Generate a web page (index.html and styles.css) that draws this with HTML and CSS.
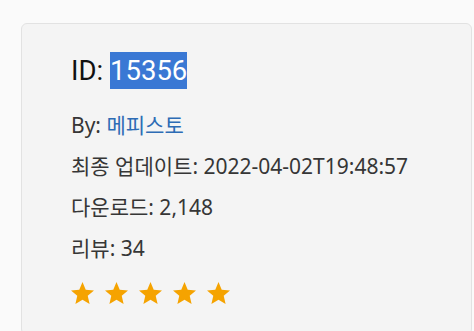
FILE: index.html
```html
<!DOCTYPE html>
<html lang="ko">
<head>
<meta charset="utf-8">
<title>ID 15356</title>
<link rel="stylesheet" href="styles.css">
</head>
<body>
<div class="card">
  <h1 class="title">ID: <span class="selected">15356</span></h1>
  <div class="row">By: <a class="author" href="#">메피스토</a></div>
  <div class="row">최종 업데이트: 2022-04-02T19:48:57</div>
  <div class="row">다운로드: 2,148</div>
  <div class="row">리뷰: 34</div>
  <div class="stars">
    <svg class="star" viewBox="2 2 20 19"><path d="M12 17.27L18.18 21l-1.64-7.03L22 9.24l-7.19-.61L12 2 9.19 8.63 2 9.24l5.46 4.73L5.82 21z"/></svg>
    <svg class="star" viewBox="2 2 20 19"><path d="M12 17.27L18.18 21l-1.64-7.03L22 9.24l-7.19-.61L12 2 9.19 8.63 2 9.24l5.46 4.73L5.82 21z"/></svg>
    <svg class="star" viewBox="2 2 20 19"><path d="M12 17.27L18.18 21l-1.64-7.03L22 9.24l-7.19-.61L12 2 9.19 8.63 2 9.24l5.46 4.73L5.82 21z"/></svg>
    <svg class="star" viewBox="2 2 20 19"><path d="M12 17.27L18.18 21l-1.64-7.03L22 9.24l-7.19-.61L12 2 9.19 8.63 2 9.24l5.46 4.73L5.82 21z"/></svg>
    <svg class="star" viewBox="2 2 20 19"><path d="M12 17.27L18.18 21l-1.64-7.03L22 9.24l-7.19-.61L12 2 9.19 8.63 2 9.24l5.46 4.73L5.82 21z"/></svg>
  </div>
</div>
</body>
</html>
```
FILE: styles.css
```css
html {
  overflow: hidden;
  background: #fafafa;
}
body {
  margin: 0;
  padding: 23px 0 0 21px;
  font-family: "Noto Sans", "Noto Sans CJK KR", sans-serif;
  color: #363636;
}
.card {
  box-sizing: border-box;
  width: 451px;
  min-height: 312px;
  background: #f4f4f4;
  border: 1px solid #e2e2e2;
  border-radius: 6px;
  padding: 29px 0 0 49px;
}
.title {
  margin: 0 0 16px;
  font-family: Roboto, "Noto Sans CJK KR", sans-serif;
  font-size: 27.5px;
  font-weight: 400;
  line-height: 36px;
  color: #111;
}
.selected {
  background: #3a78d4;
  color: #fff;
  padding: 2px 0;
}
.row {
  font-size: 21px;
  line-height: 41px;
}
.author {
  color: #2d6cb5;
  text-decoration: none;
}
.stars {
  display: flex;
  gap: 11px;
  margin-top: 13px;
}
.star {
  display: block;
  width: 23px;
  height: 22px;
  fill: #f5a300;
}
```
